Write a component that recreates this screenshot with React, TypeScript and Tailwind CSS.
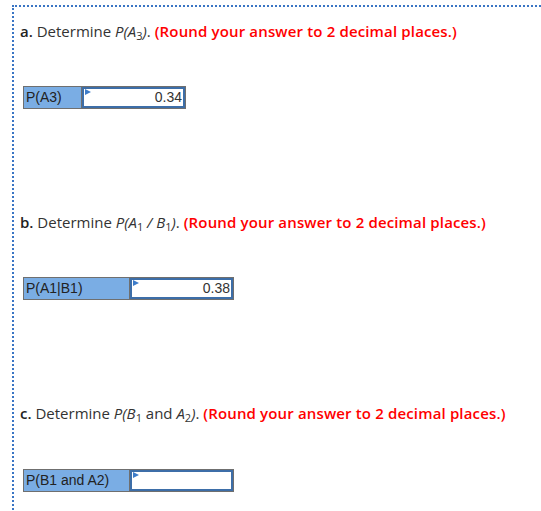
import React from "react";

const Row = ({ label, value, labelW, inputW }: { label: string; value: string; labelW: string; inputW: string }) => (
  <div className="flex h-[23px] w-fit border border-[#6f6f6f] bg-[#7aade4]" style={{ fontFamily: '"Liberation Sans", Arial, sans-serif' }}>
    <div className={`${labelW} flex items-center pl-[2px] text-[14px] text-[#222] border-r border-[#6f6f6f]`}>{label}</div>
    <div className={`${inputW} relative flex items-center justify-end border-2 border-[#3d6ea8] bg-white pr-[1px] text-[14px] text-[#333]`}>
      <svg className="absolute left-[1px] top-[0px]" width="6" height="8" viewBox="0 0 6 8">
        <polygon points="0,0 6,3 0,6" fill="#3d7cc9" />
      </svg>
      {value}
    </div>
  </div>
);

const Sub = ({ children }: { children: React.ReactNode }) => (
  <span className="text-[11px] not-italic relative top-[3px]">{children}</span>
);

const Red = () => (
  <span className="font-semibold tracking-[0.15px] text-[#ff0000]">(Round your answer to 2 decimal places.)</span>
);

export default function App() {
  const font = { fontFamily: '"Open Sans", Lato, sans-serif' };
  return (
    <div className="bg-white w-[541px] h-[511px] overflow-hidden">
      <div className="ml-[12px] mt-[5px] w-[560px] h-[560px] border-l-2 border-t-2 border-dotted border-[#3a75c4] pl-[6px] pt-[14px] text-[15px] text-[#333]" style={font}>
        <div className="h-[20px] leading-[20px]">
          <span className="font-semibold text-[#222]">a.</span> Determine <i>P(A<Sub>3</Sub>)</i>. <Red />
        </div>
        <div className="mt-[45px] ml-[3px]">
          <Row label="P(A3)" value="0.34" labelW="w-[58px]" inputW="w-[103px]" />
        </div>
        <div className="mt-[103px] h-[20px] leading-[20px]">
          <span className="font-semibold text-[#222]">b.</span> Determine <i>P(A<Sub>1</Sub> / B<Sub>1</Sub>)</i>. <Red />
        </div>
        <div className="mt-[45px] ml-[3px]">
          <Row label="P(A1|B1)" value="0.38" labelW="w-[106px]" inputW="w-[103px]" />
        </div>
        <div className="mt-[103px] h-[20px] leading-[20px]">
          <span className="font-semibold text-[#222]">c.</span> Determine <i>P(B<Sub>1</Sub></i> and <i>A<Sub>2</Sub>)</i>. <Red />
        </div>
        <div className="mt-[46px] ml-[3px]">
          <Row label="P(B1 and A2)" value="" labelW="w-[106px]" inputW="w-[103px]" />
        </div>
      </div>
    </div>
  );
}
